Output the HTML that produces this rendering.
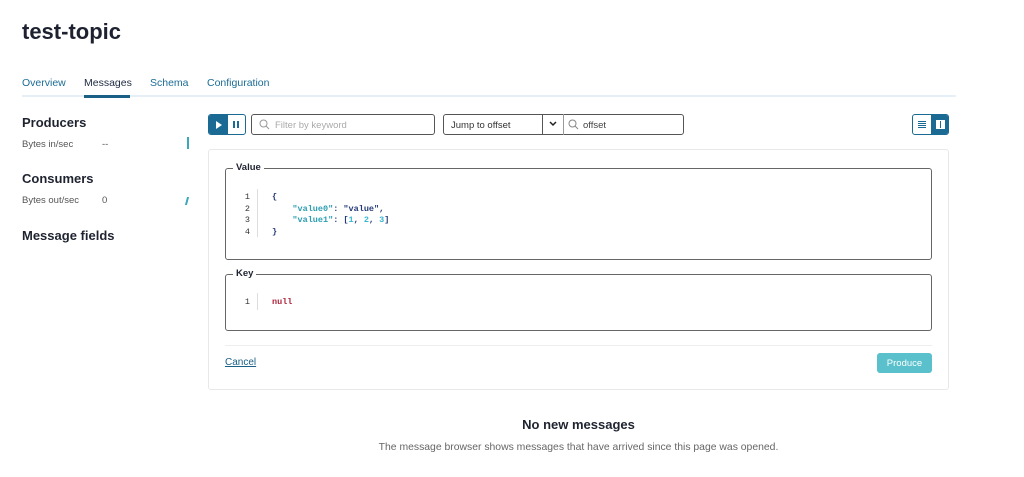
<!DOCTYPE html>
<html><head><meta charset="utf-8"><style>
*{box-sizing:border-box;margin:0;padding:0}
body{width:1024px;height:477px;background:#fff;font-family:"Liberation Sans",sans-serif;color:#1f2330;position:relative;overflow:hidden}
.a{position:absolute}
.mono{font-family:"Liberation Mono",monospace;font-size:8.5px}
</style></head><body>
<div class="a" style="left:22px;top:19px;font-size:22px;font-weight:bold;color:#1e2230">test-topic</div>
<div class="a" style="left:22px;top:77px;font-size:10.5px;color:#1c6c95">Overview</div>
<div class="a" style="left:84px;top:77px;font-size:10.5px;color:#1e2a40">Messages</div>
<div class="a" style="left:150px;top:77px;font-size:10.5px;color:#1c6c95">Schema</div>
<div class="a" style="left:207px;top:77px;font-size:10.5px;color:#1c6c95">Configuration</div>
<div class="a" style="left:22px;top:95px;width:934px;height:2px;background:#e6eff6"></div>
<div class="a" style="left:84px;top:95px;width:46px;height:3px;background:#1a5f85"></div>

<div class="a" style="left:22px;top:115px;font-size:13px;font-weight:bold">Producers</div>
<div class="a" style="left:22px;top:139px;font-size:9.5px;color:#555">Bytes in/sec</div>
<div class="a" style="left:102px;top:139px;font-size:9.5px;color:#555">--</div>
<div class="a" style="left:187px;top:137px;width:1.5px;height:12px;background:#3aa8b8"></div>
<div class="a" style="left:22px;top:171px;font-size:13px;font-weight:bold">Consumers</div>
<div class="a" style="left:22px;top:195px;font-size:9.5px;color:#555">Bytes out/sec</div>
<div class="a" style="left:102px;top:195px;font-size:9.5px;color:#555">0</div>
<div class="a" style="left:186px;top:197px;width:1.5px;height:8px;background:#3aa8b8;transform:skewX(-15deg)"></div>
<div class="a" style="left:22px;top:228px;font-size:13px;font-weight:bold">Message fields</div>

<div class="a" style="left:208px;top:114px;width:38px;height:21px;border:1px solid #1a6a94;border-radius:3px;overflow:hidden">
<div class="a" style="left:0;top:0;width:19px;height:19px;background:#1a6a94"></div>
<div class="a" style="left:7px;top:6px;width:0;height:0;border-left:6px solid #fff;border-top:4px solid transparent;border-bottom:4px solid transparent"></div>
<div class="a" style="left:24px;top:6px;width:2px;height:7px;background:#1a6a94"></div>
<div class="a" style="left:28px;top:6px;width:2px;height:7px;background:#1a6a94"></div>
</div>
<div class="a" style="left:251px;top:114px;width:184px;height:21px;border:1px solid #555;border-radius:3px"></div>
<svg class="a" style="left:259px;top:119px" width="11" height="11" viewBox="0 0 11 11"><circle cx="4.5" cy="4.5" r="3.5" fill="none" stroke="#999" stroke-width="1"/><path d="M7 7l3 3" stroke="#999"/></svg>
<div class="a" style="left:275px;top:120px;font-size:9.5px;color:#aaa">Filter by keyword</div>
<div class="a" style="left:443px;top:114px;width:241px;height:21px;border:1px solid #555;border-radius:3px"></div>
<div class="a" style="left:542px;top:114px;width:1px;height:21px;background:#555"></div>
<div class="a" style="left:563px;top:114px;width:1px;height:21px;background:#999"></div>
<div class="a" style="left:451px;top:120px;font-size:9.5px;color:#333">Jump to offset</div>
<svg class="a" style="left:548px;top:120px" width="10" height="8"><path d="M2 2l3 3 3-3" fill="none" stroke="#222" stroke-width="1.5"/></svg>
<svg class="a" style="left:568px;top:119px" width="11" height="11" viewBox="0 0 11 11"><circle cx="4.5" cy="4.5" r="3.5" fill="none" stroke="#888" stroke-width="1"/><path d="M7 7l3 3" stroke="#888"/></svg>
<div class="a" style="left:583px;top:120px;font-size:9.5px;color:#444">offset</div>

<div class="a" style="left:912px;top:114px;width:37px;height:21px;border:1px solid #1a6a94;border-radius:3px;overflow:hidden">
<div class="a" style="left:18px;top:0;width:18px;height:19px;background:#1a6a94"></div>
<div class="a" style="left:5px;top:6px;width:8px;height:7px;background:repeating-linear-gradient(#1a6a94 0 1px,transparent 1px 2px)"></div>
<div class="a" style="left:23px;top:5px;width:9px;height:9px;border:1px solid #fff;background:linear-gradient(90deg,#fff 0 3px,#1a6a94 3px 4px,#fff 4px)"></div>
</div>

<div class="a" style="left:208px;top:149px;width:741px;height:241px;border:1px solid #e8e8e8;border-radius:3px"></div>
<div class="a" style="left:225px;top:168px;width:707px;height:92px;border:1px solid #666;border-radius:3px"></div>
<div class="a" style="left:233px;top:162px;background:#fff;padding:0 3px;font-size:9.5px;font-weight:bold">Value</div>
<div class="a mono" style="left:240px;top:192px;width:10px;text-align:right;line-height:11.5px;color:#333">1<br>2<br>3<br>4</div>
<div class="a" style="left:257px;top:189px;width:1px;height:48px;background:#ddd"></div>
<div class="a mono" style="left:272px;top:192px;line-height:11.5px;white-space:pre;color:#233a78;font-weight:bold">{
    <span style="color:#2a9db0">"value0"</span>: "value",
    <span style="color:#2a9db0">"value1"</span>: [<span style="color:#37b7d0">1</span>, <span style="color:#37b7d0">2</span>, <span style="color:#37b7d0">3</span>]
}</div>
<div class="a" style="left:225px;top:274px;width:707px;height:57px;border:1px solid #666;border-radius:3px"></div>
<div class="a" style="left:233px;top:268px;background:#fff;padding:0 3px;font-size:9.5px;font-weight:bold">Key</div>
<div class="a mono" style="left:240px;top:297px;width:10px;text-align:right;color:#333">1</div>
<div class="a" style="left:257px;top:293px;width:1px;height:17px;background:#ddd"></div>
<div class="a mono" style="left:272px;top:297px;color:#b0233a;font-weight:bold">null</div>
<div class="a" style="left:225px;top:345px;width:707px;height:1px;background:#eee"></div>
<div class="a" style="left:225px;top:357px;font-size:10px;color:#1a5f85;text-decoration:underline">Cancel</div>
<div class="a" style="left:877px;top:353px;width:55px;height:20px;background:#59c0cc;border-radius:3px;color:#fff;font-size:9.5px;text-align:center;line-height:21px">Produce</div>

<div class="a" style="left:0;top:417px;width:1157px;text-align:center;font-size:13px;font-weight:bold">No new messages</div>
<div class="a" style="left:0;top:442px;width:1157px;text-align:center;font-size:10.4px;color:#666">The message browser shows messages that have arrived since this page was opened.</div>
</body></html>
